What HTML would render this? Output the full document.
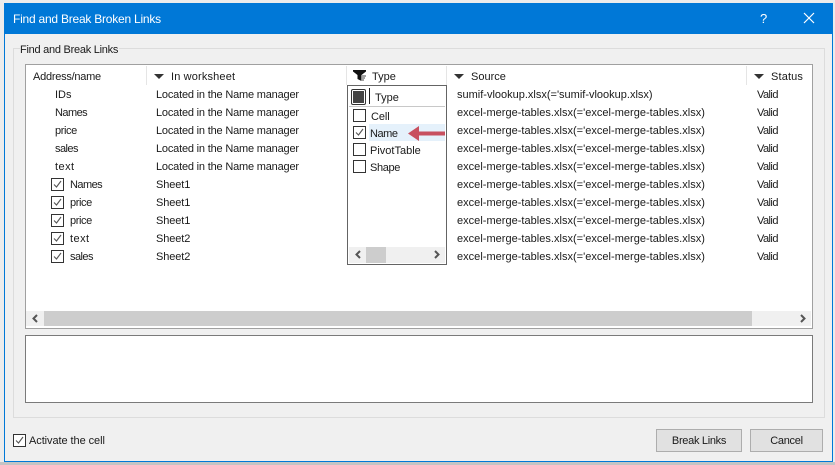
<!DOCTYPE html>
<html><head><meta charset="utf-8">
<style>
html,body{margin:0;padding:0;width:835px;height:465px;overflow:hidden;background:#ececec}
*{box-sizing:border-box}
body{font-family:"Liberation Sans",sans-serif;font-size:11px;color:#1a1a1a;position:relative}
.a{position:absolute}
.t{position:absolute;white-space:nowrap;line-height:14px;height:14px}
.n{letter-spacing:-.55px}.p{letter-spacing:-.4px}.x{letter-spacing:.45px}.s{letter-spacing:-.55px}
.l{letter-spacing:-.19px}.h{letter-spacing:-.1px}.e{letter-spacing:.02px}.v{letter-spacing:-.55px}
.cb{position:absolute;width:13px;height:13px;border:1px solid #333;background:#fff}
.cb svg{position:absolute;left:0;top:0}
</style></head><body>
<div class="a" style="left:0;top:462px;width:835px;height:3px;background:#c4c4c4"></div>
<div class="a" style="left:4px;top:3px;width:829px;height:459px;background:#f0f0f0;border:1px solid #0078d7"></div>
<div class="a" style="left:4px;top:3px;width:829px;height:31px;background:#0078d7"></div>
<div class="t" style="left:13px;top:12px;color:#fff;font-size:12px;letter-spacing:-.23px">Find and Break Broken Links</div>
<div class="t" style="left:760px;top:12px;color:#fff;font-size:13px">?</div>
<svg class="a" style="left:803px;top:12px" width="12" height="12"><path d="M1 1L11 11M11 1L1 11" stroke="#fff" stroke-width="1.200" fill="none"/></svg>

<div class="a" style="left:13px;top:48px;width:812px;height:370px;border:1px solid #dcdcdc"></div>
<div class="t" style="left:20px;top:43px;background:#f0f0f0;letter-spacing:-.26px;padding-right:1px">Find and Break Links</div>

<div class="a" style="left:25px;top:64px;width:788px;height:265px;background:#fff;border:1px solid #a0a0a0"></div>
<div class="a" style="left:146px;top:66px;width:1px;height:19px;background:#e5e5e5"></div>
<div class="a" style="left:346px;top:66px;width:1px;height:19px;background:#e5e5e5"></div>
<div class="a" style="left:446px;top:66px;width:1px;height:19px;background:#e5e5e5"></div>
<div class="a" style="left:746px;top:66px;width:1px;height:19px;background:#e5e5e5"></div>

<div class="t" style="left:33px;top:70px;letter-spacing:-.25px">Address/name</div>
<svg class="a" style="left:154px;top:74px" width="11" height="6"><path d="M0 0H10L5 5Z" fill="#333"/></svg>
<div class="t" style="left:171px;top:70px;letter-spacing:.15px">In worksheet</div>
<svg class="a" style="left:353px;top:70px" width="14" height="12"><path d="M0 0H13V1.500L8.500 5V11L4.500 9V5L0 1.500Z" fill="#111"/><path d="M9 6H13M9 8H12M9 10H11" stroke="#444" fill="none"/></svg>
<div class="t" style="left:372px;top:70px">Type</div>
<svg class="a" style="left:454px;top:74px" width="11" height="6"><path d="M0 0H10L5 5Z" fill="#333"/></svg>
<div class="t" style="left:471px;top:70px">Source</div>
<svg class="a" style="left:754px;top:74px" width="11" height="6"><path d="M0 0H10L5 5Z" fill="#333"/></svg>
<div class="t" style="left:771px;top:70px;letter-spacing:.15px">Status</div>

<div class="t" style="left:55px;top:88px">IDs</div>
<div class="t n" style="left:55px;top:106px">Names</div>
<div class="t p" style="left:55px;top:124px">price</div>
<div class="t s" style="left:55px;top:142px">sales</div>
<div class="t x" style="left:55px;top:160px">text</div>
<div class="t n" style="left:70px;top:178px">Names</div>
<div class="t p" style="left:70px;top:196px">price</div>
<div class="t p" style="left:70px;top:214px">price</div>
<div class="t x" style="left:70px;top:232px">text</div>
<div class="t s" style="left:70px;top:250px">sales</div>

<div class="cb" style="left:51px;top:178px"><svg width="11" height="11"><path d="M2 5.500L4.500 8L9 2" stroke="#555" stroke-width="1.100" fill="none"/></svg></div>
<div class="cb" style="left:51px;top:196px"><svg width="11" height="11"><path d="M2 5.500L4.500 8L9 2" stroke="#555" stroke-width="1.100" fill="none"/></svg></div>
<div class="cb" style="left:51px;top:214px"><svg width="11" height="11"><path d="M2 5.500L4.500 8L9 2" stroke="#555" stroke-width="1.100" fill="none"/></svg></div>
<div class="cb" style="left:51px;top:232px"><svg width="11" height="11"><path d="M2 5.500L4.500 8L9 2" stroke="#555" stroke-width="1.100" fill="none"/></svg></div>
<div class="cb" style="left:51px;top:250px"><svg width="11" height="11"><path d="M2 5.500L4.500 8L9 2" stroke="#555" stroke-width="1.100" fill="none"/></svg></div>

<div class="t l" style="left:156px;top:88px">Located in the Name manager</div>
<div class="t l" style="left:156px;top:106px">Located in the Name manager</div>
<div class="t l" style="left:156px;top:124px">Located in the Name manager</div>
<div class="t l" style="left:156px;top:142px">Located in the Name manager</div>
<div class="t l" style="left:156px;top:160px">Located in the Name manager</div>
<div class="t h" style="left:156px;top:178px">Sheet1</div>
<div class="t h" style="left:156px;top:196px">Sheet1</div>
<div class="t h" style="left:156px;top:214px">Sheet1</div>
<div class="t h" style="left:156px;top:232px">Sheet2</div>
<div class="t h" style="left:156px;top:250px">Sheet2</div>

<div class="t" style="left:457px;top:88px">sumif-vlookup.xlsx(='sumif-vlookup.xlsx)</div>
<div class="t e" style="left:457px;top:106px">excel-merge-tables.xlsx(='excel-merge-tables.xlsx)</div>
<div class="t e" style="left:457px;top:124px">excel-merge-tables.xlsx(='excel-merge-tables.xlsx)</div>
<div class="t e" style="left:457px;top:142px">excel-merge-tables.xlsx(='excel-merge-tables.xlsx)</div>
<div class="t e" style="left:457px;top:160px">excel-merge-tables.xlsx(='excel-merge-tables.xlsx)</div>
<div class="t e" style="left:457px;top:178px">excel-merge-tables.xlsx(='excel-merge-tables.xlsx)</div>
<div class="t e" style="left:457px;top:196px">excel-merge-tables.xlsx(='excel-merge-tables.xlsx)</div>
<div class="t e" style="left:457px;top:214px">excel-merge-tables.xlsx(='excel-merge-tables.xlsx)</div>
<div class="t e" style="left:457px;top:232px">excel-merge-tables.xlsx(='excel-merge-tables.xlsx)</div>
<div class="t e" style="left:457px;top:250px">excel-merge-tables.xlsx(='excel-merge-tables.xlsx)</div>

<div class="t v" style="left:757px;top:88px">Valid</div>
<div class="t v" style="left:757px;top:106px">Valid</div>
<div class="t v" style="left:757px;top:124px">Valid</div>
<div class="t v" style="left:757px;top:142px">Valid</div>
<div class="t v" style="left:757px;top:160px">Valid</div>
<div class="t v" style="left:757px;top:178px">Valid</div>
<div class="t v" style="left:757px;top:196px">Valid</div>
<div class="t v" style="left:757px;top:214px">Valid</div>
<div class="t v" style="left:757px;top:232px">Valid</div>
<div class="t v" style="left:757px;top:250px">Valid</div>

<!-- main scrollbar -->
<div class="a" style="left:26px;top:311px;width:785px;height:15px;background:#f0f0f0"></div>
<div class="a" style="left:44px;top:311px;width:708px;height:15px;background:#cdcdcd"></div>
<svg class="a" style="left:31px;top:314px" width="8" height="9"><path d="M6 1L2.500 4.500L6 8" stroke="#555" stroke-width="2" fill="none"/></svg>
<svg class="a" style="left:799px;top:314px" width="8" height="9"><path d="M2 1L5.500 4.500L2 8" stroke="#555" stroke-width="2" fill="none"/></svg>

<!-- popup -->
<div class="a" style="left:347px;top:85px;width:100px;height:180px;background:#fff;border:1px solid #646464"></div>
<div class="a" style="left:351px;top:89px;width:15px;height:16px;border:1px solid #333;border-radius:2px;background:#fff"></div>
<div class="a" style="left:353px;top:91px;width:11px;height:12px;background:#444"></div>
<div class="a" style="left:369px;top:88px;width:1px;height:16px;background:#222"></div>
<div class="t" style="left:375px;top:91px">Type</div>
<div class="a" style="left:349px;top:106px;width:96px;height:1px;background:#c8c8c8"></div>
<div class="a" style="left:369px;top:124px;width:76px;height:17px;background:#e5f1fb"></div>
<div class="cb" style="left:353px;top:109px"></div>
<div class="t" style="left:371px;top:110px;letter-spacing:-.1px">Cell</div>
<div class="cb" style="left:353px;top:126px"><svg width="11" height="11"><path d="M2 5.500L4.500 8L9 2" stroke="#555" stroke-width="1.100" fill="none"/></svg></div>
<div class="t" style="left:370px;top:127px;letter-spacing:-.45px">Name</div>
<div class="cb" style="left:353px;top:143px"></div>
<div class="t" style="left:370px;top:144px">PivotTable</div>
<div class="cb" style="left:353px;top:160px"></div>
<div class="t" style="left:370px;top:161px;letter-spacing:-.35px">Shape</div>
<svg class="a" style="left:408px;top:125px" width="38" height="17"><path d="M37 6.500H11V1L0 8.500L11 16V10.500H37Z" fill="#c8505f"/></svg>
<div class="a" style="left:349px;top:247px;width:96px;height:16px;background:#f0f0f0"></div>
<div class="a" style="left:366px;top:247px;width:20px;height:16px;background:#cdcdcd"></div>
<svg class="a" style="left:354px;top:250px" width="8" height="9"><path d="M6 1L2.500 4.500L6 8" stroke="#555" stroke-width="2" fill="none"/></svg>
<svg class="a" style="left:433px;top:250px" width="8" height="9"><path d="M2 1L5.500 4.500L2 8" stroke="#555" stroke-width="2" fill="none"/></svg>

<!-- text box -->
<div class="a" style="left:25px;top:335px;width:788px;height:68px;background:#fff;border:1px solid #7a7a7a"></div>

<!-- bottom -->
<div class="cb" style="left:13px;top:434px"><svg width="11" height="11"><path d="M2 5.500L4.500 8L9 2" stroke="#555" stroke-width="1.100" fill="none"/></svg></div>
<div class="t" style="left:29px;top:434px;letter-spacing:-.07px">Activate the cell</div>
<div class="a" style="left:656px;top:429px;width:86px;height:23px;background:#e1e1e1;border:1px solid #adadad;text-align:center;line-height:23px;letter-spacing:-.3px">Break Links</div>
<div class="a" style="left:750px;top:429px;width:73px;height:23px;background:#e1e1e1;border:1px solid #adadad;text-align:center;line-height:23px;letter-spacing:-.3px">Cancel</div>
</body></html>
